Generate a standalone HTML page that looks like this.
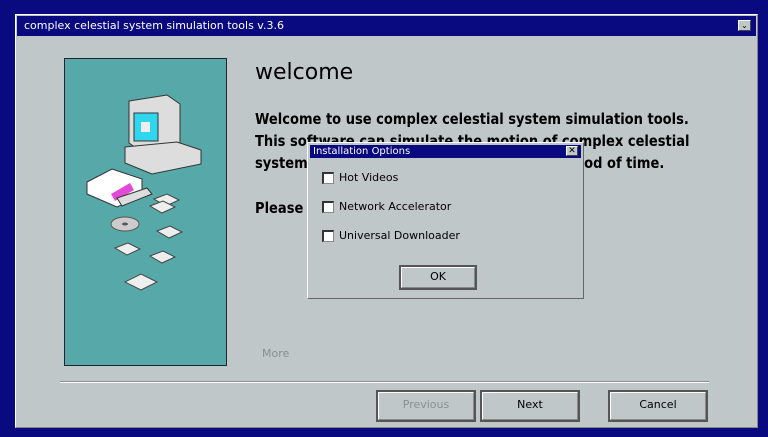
<!DOCTYPE html>
<html><head><style>
*{margin:0;padding:0;box-sizing:border-box}
body{width:768px;height:437px;background:#0a0a80;position:relative;overflow:hidden;font-family:"DejaVu Sans","Liberation Sans",sans-serif}
.win{position:absolute;left:15px;top:14px;width:743px;height:414px;background:#c0c7c8;border:1px solid #fff;border-right-color:#888;border-bottom-color:#888}
.tb{position:absolute;left:1px;top:1px;right:1px;height:20px;background:#0a0a80;color:#fff;font-size:11px;line-height:20px;padding-left:7px}
.tbtn{position:absolute;right:5px;top:4px;width:13px;height:11px;background:#c0c7c8;border:1px solid #fff;border-right-color:#444;border-bottom-color:#444;font-size:8px;line-height:9px;text-align:center;color:#000}
.pic{position:absolute;left:48px;top:43px;width:163px;height:308px;background:#56a9a8;border:1px solid #223}
.t{position:absolute;color:#000;white-space:nowrap}
.btn{position:absolute;top:375px;width:100px;height:32px;border:2px solid #555;background:#c0c7c8;font-size:11px;text-align:center;line-height:26px}
.btn:before{content:"";position:absolute;inset:0;border:1px solid #fff;border-right-color:#888;border-bottom-color:#888}
.dlg{position:absolute;left:307px;top:142px;width:277px;height:157px;background:#c0c7c8;border:1px solid #fff;border-right-color:#666;border-bottom-color:#666}
.dtb{position:absolute;left:2px;top:2px;right:2px;height:13px;background:#0a0a80;color:#fff;font-size:10px;line-height:13px;padding-left:3px}
.cb{position:absolute;left:14px;width:12px;height:12px;background:#fff;border:1px solid #888;border-left:2px solid #333;border-top:2px solid #333}
.lbl{position:absolute;left:31px;font-size:11px}
.body{font-size:15px;line-height:22px;font-weight:600;transform:scaleX(0.87);transform-origin:0 0}
</style></head><body>
<div class="win">
<div class="tb">complex celestial system simulation tools v.3.6<div class="tbtn">⌄</div></div>
<div class="pic">
<svg width="163" height="308" viewBox="0 0 163 308">
<g transform="translate(-48,-43)">
<polygon points="112,85 150,79 163,88 163,128 125,136 112,127" fill="#ddd" stroke="#333"/>
<rect x="117" y="97" width="24" height="28" fill="#2fd6ee" stroke="#333"/>
<rect x="124" y="106" width="9" height="10" fill="#eee"/>
<polygon points="108,131 160,126 184,134 184,148 135,158 108,147" fill="#ddd" stroke="#333"/>
<polygon points="70,166 95,153 125,163 125,180 100,191 70,178" fill="#fff" stroke="#333"/>
<polygon points="94,178 113,167 117,174 98,185" fill="#e14ad8"/>
<polygon points="100,182 130,172 135,178 105,190" fill="#ddd" stroke="#333"/>
<g fill="#eee" stroke="#444"><polygon points="137,183 150,178 162,184 149,190"/><polygon points="133,190 146,185 158,191 145,197"/><polygon points="140,215 153,210 165,216 152,222"/><polygon points="98,232 111,227 123,233 110,239"/><polygon points="133,240 146,235 158,241 145,247"/><polygon points="108,266 124,258 140,266 124,274"/></g>
<ellipse cx="108" cy="208" rx="14" ry="7" fill="#ccc" stroke="#555"/><ellipse cx="108" cy="208" rx="3" ry="1.5" fill="#555"/>
</g></svg>
</div>
<div class="t" style="left:239px;top:45px;font-size:22px">welcome</div>
<div class="t body" style="left:239px;top:93px">Welcome to use complex celestial system simulation tools.<br>This software can simulate the motion of complex celestial<br>system with precision within a specified period of time.</div>
<div class="t body" style="left:239px;top:182px">Please</div>
<div class="t" style="left:246px;top:332px;font-size:11px;color:#8a9090">More</div>
<div style="position:absolute;left:44px;top:366px;width:649px;height:2px;border-top:1px solid #8a9090;border-bottom:1px solid #fff"></div>
<div class="btn" style="left:360px;color:#8a9090">Previous</div>
<div class="btn" style="left:464px">Next</div>
<div class="btn" style="left:592px">Cancel</div>
</div>
<div class="dlg">
<div class="dtb">Installation Options<div style="position:absolute;right:3px;top:1px;width:12px;height:10px;background:#c0c7c8;border:1px solid #fff;border-right-color:#444;border-bottom-color:#444;color:#000;font-size:9px;line-height:8px;text-align:center">✕</div></div>
<div class="cb" style="top:29px"></div><div class="lbl" style="top:28px">Hot Videos</div>
<div class="cb" style="top:58px"></div><div class="lbl" style="top:57px">Network Accelerator</div>
<div class="cb" style="top:87px"></div><div class="lbl" style="top:86px">Universal Downloader</div>
<div class="btn" style="left:91px;top:122px;width:78px;height:25px;line-height:19px">OK</div>
</div>
</body></html>
